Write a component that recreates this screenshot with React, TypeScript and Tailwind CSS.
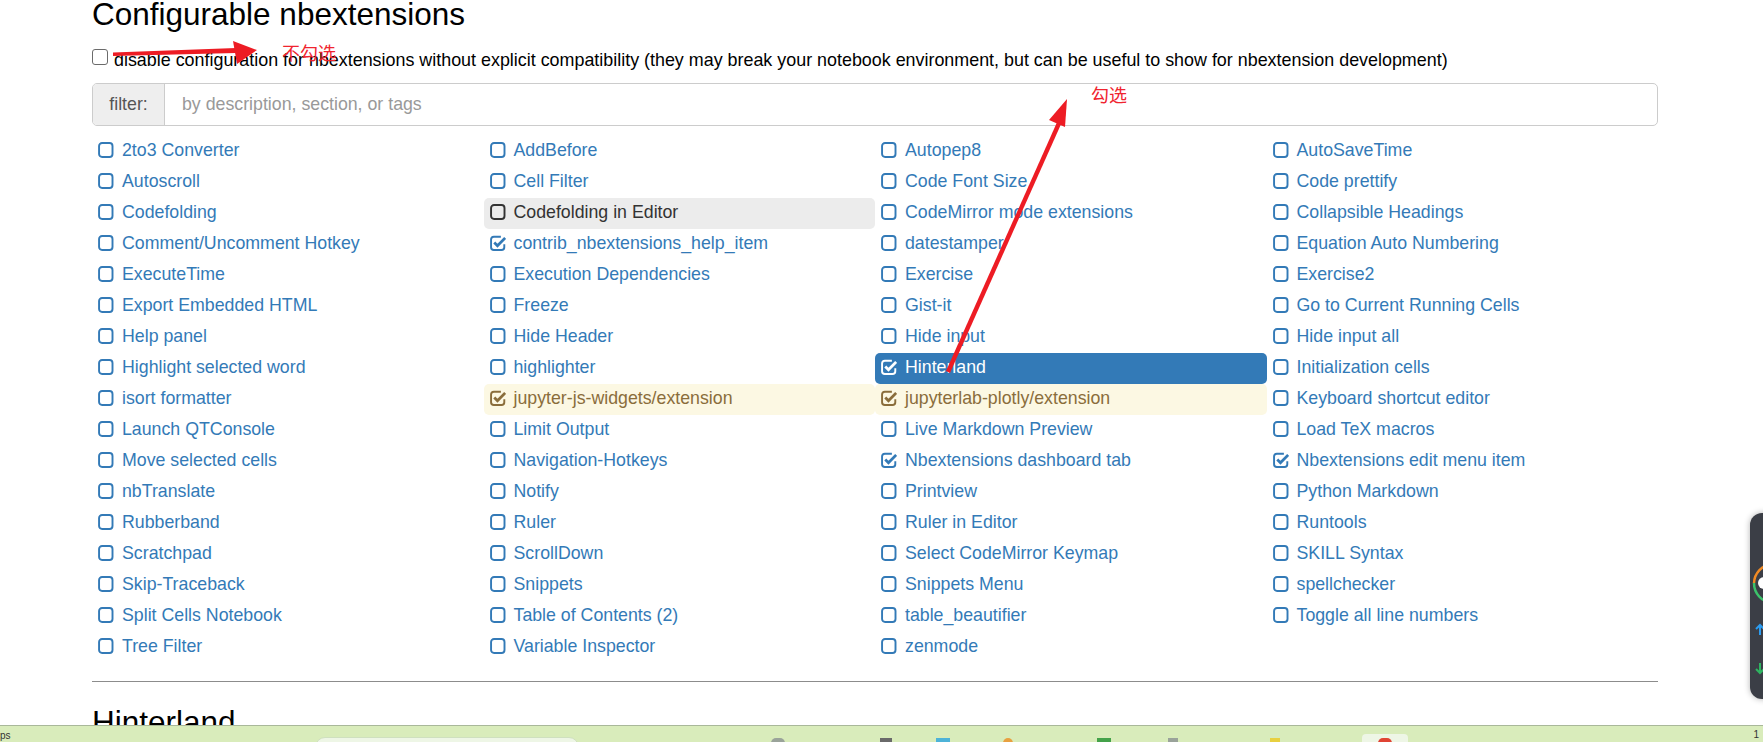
import React from "react";

type St = "n" | "h" | "s" | "w";
type Item = [string, boolean, St];

const items: Item[] = [
  ["2to3 Converter", false, "n"], ["AddBefore", false, "n"], ["Autopep8", false, "n"], ["AutoSaveTime", false, "n"],
  ["Autoscroll", false, "n"], ["Cell Filter", false, "n"], ["Code Font Size", false, "n"], ["Code prettify", false, "n"],
  ["Codefolding", false, "n"], ["Codefolding in Editor", false, "h"], ["CodeMirror mode extensions", false, "n"], ["Collapsible Headings", false, "n"],
  ["Comment/Uncomment Hotkey", false, "n"], ["contrib_nbextensions_help_item", true, "n"], ["datestamper", false, "n"], ["Equation Auto Numbering", false, "n"],
  ["ExecuteTime", false, "n"], ["Execution Dependencies", false, "n"], ["Exercise", false, "n"], ["Exercise2", false, "n"],
  ["Export Embedded HTML", false, "n"], ["Freeze", false, "n"], ["Gist-it", false, "n"], ["Go to Current Running Cells", false, "n"],
  ["Help panel", false, "n"], ["Hide Header", false, "n"], ["Hide input", false, "n"], ["Hide input all", false, "n"],
  ["Highlight selected word", false, "n"], ["highlighter", false, "n"], ["Hinterland", true, "s"], ["Initialization cells", false, "n"],
  ["isort formatter", false, "n"], ["jupyter-js-widgets/extension", true, "w"], ["jupyterlab-plotly/extension", true, "w"], ["Keyboard shortcut editor", false, "n"],
  ["Launch QTConsole", false, "n"], ["Limit Output", false, "n"], ["Live Markdown Preview", false, "n"], ["Load TeX macros", false, "n"],
  ["Move selected cells", false, "n"], ["Navigation-Hotkeys", false, "n"], ["Nbextensions dashboard tab", true, "n"], ["Nbextensions edit menu item", true, "n"],
  ["nbTranslate", false, "n"], ["Notify", false, "n"], ["Printview", false, "n"], ["Python Markdown", false, "n"],
  ["Rubberband", false, "n"], ["Ruler", false, "n"], ["Ruler in Editor", false, "n"], ["Runtools", false, "n"],
  ["Scratchpad", false, "n"], ["ScrollDown", false, "n"], ["Select CodeMirror Keymap", false, "n"], ["SKILL Syntax", false, "n"],
  ["Skip-Traceback", false, "n"], ["Snippets", false, "n"], ["Snippets Menu", false, "n"], ["spellchecker", false, "n"],
  ["Split Cells Notebook", false, "n"], ["Table of Contents (2)", false, "n"], ["table_beautifier", false, "n"], ["Toggle all line numbers", false, "n"],
  ["Tree Filter", false, "n"], ["Variable Inspector", false, "n"], ["zenmode", false, "n"],
];

function Box({ checked }: { checked: boolean }) {
  return (
    <svg width="16" height="16" viewBox="0 0 15 15" fill="none" stroke="currentColor" className="shrink-0">
      {checked ? (
        <>
          <path d="M10.2 1.6 H3.6 Q1 1.6 1 4.2 V11.4 Q1 14 3.6 14 H10.8 Q13.4 14 13.4 11.4 V8.6" strokeWidth="1.8" />
          <path d="M4 7 L7 10 L14.2 2.8" strokeWidth="2.6" />
        </>
      ) : (
        <rect x="1" y="1" width="12.6" height="13" rx="2.8" strokeWidth="1.8" />
      )}
    </svg>
  );
}

function Row({ item }: { item: Item }) {
  const [label, checked, st] = item;
  const cls =
    st === "s"
      ? "bg-[#337ab7] text-white"
      : st === "w"
      ? "bg-[#fcf8e3] text-[#8a6d3b]"
      : st === "h"
      ? "bg-[#ececec] text-[#333333]"
      : "text-[#337ab7]";
  return (
    <div className={`h-[31px] flex items-start gap-[8px] rounded-[5px] pl-[6px] ${cls}`}>
      <div className="pt-[6px]">
        <Box checked={checked} />
      </div>
      <span className="leading-[28px] whitespace-nowrap">{label}</span>
    </div>
  );
}

const taskIcons = [
  { gap: "ml-[192px]", cls: "w-[14px] rounded-full bg-[#9aa39a]" },
  { gap: "ml-[95px]", cls: "w-[12px] bg-[#6a6a6a]" },
  { gap: "ml-[44px]", cls: "w-[14px] bg-[#4db3d8]" },
  { gap: "ml-[53px]", cls: "w-[10px] rounded-full bg-[#e8a040]" },
  { gap: "ml-[84px]", cls: "w-[14px] bg-[#44a24a]" },
  { gap: "ml-[57px]", cls: "w-[10px] bg-[#9aa39a]" },
  { gap: "ml-[92px]", cls: "w-[10px] bg-[#e8d040]" },
];

export default function App() {
  return (
    <div
      className="relative w-full min-h-screen bg-white overflow-hidden"
      style={{ fontFamily: '"Liberation Sans", Arial, "Noto Sans CJK SC", sans-serif' }}
    >
      <div className="pl-[92px]">
        <div className="w-[1566px]">
          <h2 className="text-[31.5px] leading-[33px] mt-[-2px] text-black font-normal whitespace-nowrap">Configurable nbextensions</h2>
          <div className="mt-[17px] flex items-start gap-[6px] text-[17.9px] leading-[25px] text-black">
            <div className="mt-[1px] w-[16px] h-[16px] rounded-[3px] border-[1.5px] border-[#6b6b6b] bg-white shrink-0" />
            <span className="whitespace-nowrap">
              disable configuration for nbextensions without explicit compatibility (they may break your notebook environment, but can be useful to show for nbextension development)
            </span>
          </div>
          <div className="mt-[10px] flex h-[43px] border border-[#cccccc] rounded-[5px] overflow-hidden text-[17.75px]">
            <div className="w-[72px] shrink-0 bg-[#eeeeee] border-r border-[#cccccc] flex items-center justify-center text-[#555555]">
              filter:
            </div>
            <div className="flex-1 flex items-center pl-[17px] text-[#999999]">by description, section, or tags</div>
          </div>
          <div className="mt-[10px] grid grid-cols-4 text-[17.75px]">
            {items.map((it, i) => (
              <Row key={i} item={it} />
            ))}
          </div>
          <div className="mt-[18px] h-px bg-[#8c8c8c]" />
          <h2 className="mt-[24px] text-[31.5px] leading-[33px] text-black font-normal">Hinterland</h2>
          <div className="h-[200px]" />
        </div>
      </div>

      {/* red annotations */}
      <svg className="absolute left-0 top-0 pointer-events-none" width="1763" height="742">
        <path d="M113 52.5 L236 48 L236 53 L113 56 Z" fill="#ed1c24" />
        <path d="M257 50 L233 41 L237 64 Z" fill="#ed1c24" />
        <path d="M946 371 L1058 120 L1062 122 L950 373 Z" fill="#ed1c24" />
        <path d="M1067 99 L1049 120 L1065 127 Z" fill="#ed1c24" />
      </svg>
      <div
        className="absolute left-[282px] top-[41px] text-[18px] leading-[22px] text-[#f0242f]"
        style={{ fontFamily: '"Noto Sans CJK SC", sans-serif' }}
      >
        不勾选
      </div>
      <div
        className="absolute left-[1091px] top-[83px] text-[18px] leading-[22px] text-[#f0242f]"
        style={{ fontFamily: '"Noto Sans CJK SC", sans-serif' }}
      >
        勾选
      </div>

      {/* floating side widget */}
      <div className="fixed left-[1750px] top-[513px] w-[40px] h-[186px] rounded-l-[12px] bg-[#3b3e46] shadow-[0_0_6px_rgba(0,0,0,0.3)] overflow-hidden">
        <svg width="40" height="186" viewBox="0 0 40 186">
          <path d="M22 51 A20 20 0 0 0 4 70" stroke="#f08a24" strokeWidth="2.5" fill="none" />
          <path d="M4 70 A20 20 0 0 0 22 90" stroke="#3cc26a" strokeWidth="2.5" fill="none" />
          <circle cx="14" cy="70" r="6" fill="#ffffff" />
          <path d="M10 112 L10 122 M6 116 L10 112 L14 116" stroke="#2c9cf0" strokeWidth="2" fill="none" />
          <path d="M10 150 L10 160 M6 156 L10 160 L14 156" stroke="#2fb461" strokeWidth="2" fill="none" />
        </svg>
      </div>

      {/* taskbar */}
      <div className="fixed left-0 right-0 bottom-0 h-[17px] bg-[#d9ecbb] border-t border-[#a9b89a] flex items-start overflow-hidden">
        <span className="mt-[5px] w-[20px] text-[10px] leading-[10px] text-[#333]">ps</span>
        <div className="ml-[295px] mt-[11px] w-[264px] h-[20px] shrink-0 rounded-[10px] bg-[#eef6e6] border border-[#cfe0bf]" />
        {taskIcons.map((t, i) => (
          <div key={i} className={`${t.gap} mt-[12px] h-[10px] shrink-0 ${t.cls}`} />
        ))}
        <div className="ml-[82px] mt-[8px] w-[46px] h-[20px] shrink-0 rounded-[4px] bg-[#eef6e6] flex justify-center pt-[4px]">
          <div className="w-[14px] h-[10px] rounded-full bg-[#e04434]" />
        </div>
        <span className="ml-auto mr-[4px] mt-[4px] text-[10px] leading-[10px] text-[#333]">1</span>
      </div>
    </div>
  );
}
